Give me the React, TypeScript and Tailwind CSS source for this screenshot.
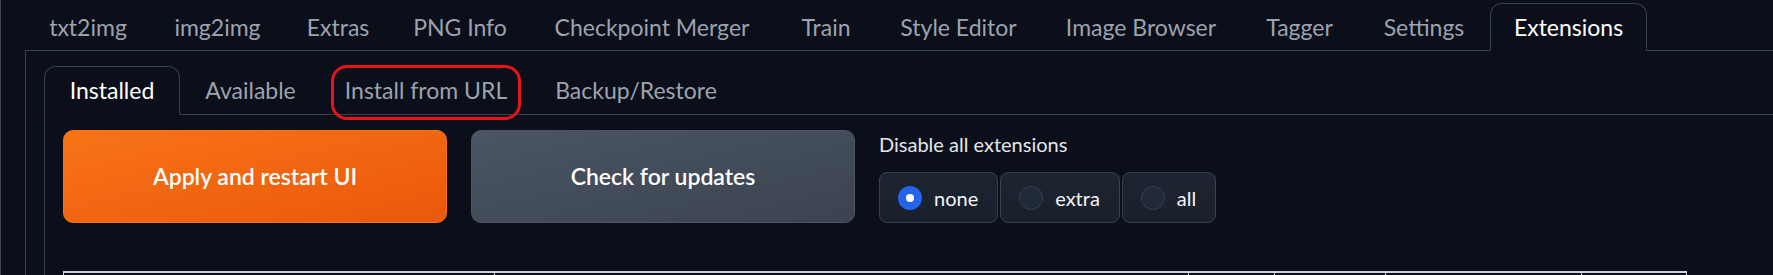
type Tab = {
  label: string
  width: string
  active?: boolean
}

const mainTabs: Tab[] = [
  { label: 'txt2img', width: 'w-[126px]' },
  { label: 'img2img', width: 'w-[133px]' },
  { label: 'Extras', width: 'w-[108px]' },
  { label: 'PNG Info', width: 'w-[136px]' },
  { label: 'Checkpoint Merger', width: 'w-[248px]' },
  { label: 'Train', width: 'w-[100px]' },
  { label: 'Style Editor', width: 'w-[165px]' },
  { label: 'Image Browser', width: 'w-[200px]' },
  { label: 'Tagger', width: 'w-[117px]' },
  { label: 'Settings', width: 'w-[132px]' },
  { label: 'Extensions', width: 'w-[157px]', active: true },
]

const extensionTabs: Tab[] = [
  { label: 'Installed', width: 'w-[136px]', active: true },
  { label: 'Available', width: 'w-[141px]' },
  { label: 'Install from URL', width: 'w-[210px]' },
  { label: 'Backup/Restore', width: 'w-[210px]' },
]

// only the top edge of the extensions table is inside the screenshot
const columnWidths = [
  'w-[431px]',
  'w-[695px]',
  'w-[86px]',
  'w-[111px]',
  'w-[196px]',
  'w-[105px]',
]

const disableOptions = ['none', 'extra', 'all']

function TabButton({ tab, height }: { tab: Tab; height: string }) {
  const base = `${tab.width} ${height} -mb-px flex shrink-0 items-center justify-center whitespace-nowrap rounded-t-[12px] border text-[23px]`
  if (tab.active) {
    return (
      <button className={`${base} border-[#374151] border-b-[#0b0f19] bg-[#0b0f19] text-white`}>
        {tab.label}
      </button>
    )
  }
  return (
    <button className={`${base} border-transparent text-[#9ca3af]`}>
      {tab.label}
    </button>
  )
}

function RadioOption({ label, checked }: { label: string; checked?: boolean }) {
  return (
    <label className="flex h-[51px] items-center gap-[12px] rounded-[8px] border border-[#374151] bg-gradient-to-b from-[#1e2532] to-[#19202c] pl-[18px] pr-[19px]">
      {checked ? (
        <span className="flex size-[24px] items-center justify-center rounded-full bg-[#2563eb]">
          <span className="size-[8px] rounded-full bg-white" />
        </span>
      ) : (
        <span className="size-[24px] rounded-full border border-[#374151] bg-[#1f2937]" />
      )}
      <span className="text-[20px] text-[#f3f4f6]">{label}</span>
    </label>
  )
}

export default function App() {
  return (
    <div className="relative h-[275px] w-[1773px] overflow-hidden border-l border-[#3f444e] bg-[#0b0f19] font-[Lato,sans-serif]">
      <div className="ml-[24px] w-[1800px] pt-[3px]">
        <nav className="flex border-b border-[#374151]">
          {mainTabs.map((tab) => (
            <TabButton key={tab.label} tab={tab} height="h-[48px]" />
          ))}
        </nav>

        <div className="border-l border-[#374151] pl-[18px] pt-[15px]">
          <nav className="flex border-b border-[#374151]">
            {extensionTabs.map((tab) => (
              <TabButton key={tab.label} tab={tab} height="h-[49px]" />
            ))}
          </nav>

          <div className="border-l border-[#374151] pl-[18px] pt-[15px]">
            <div className="flex items-start gap-[24px]">
              <button className="h-[93px] w-[384px] rounded-[10px] border border-[#f97316] bg-gradient-to-br from-[#f97316] to-[#ea580c] text-[23px] font-semibold text-white">
                Apply and restart UI
              </button>
              <button className="h-[93px] w-[384px] rounded-[10px] border border-[#4b5563] bg-gradient-to-br from-[#4b5563] to-[#3b4350] text-[23px] font-semibold text-white">
                Check for updates
              </button>
              <div className="flex flex-col">
                <span className="text-[20px] leading-[28px] text-[#e5e7eb]">
                  Disable all extensions
                </span>
                <div className="mt-[14px] flex gap-[2px]">
                  {disableOptions.map((option) => (
                    <RadioOption
                      key={option}
                      label={option}
                      checked={option === 'none'}
                    />
                  ))}
                </div>
              </div>
            </div>

            <div className="mt-[48px] flex w-[1624px] border-l border-t-2 border-[#d1d5db]">
              {columnWidths.map((width) => (
                <div
                  key={width}
                  className={`${width} h-[40px] border-r border-[#d1d5db]`}
                />
              ))}
            </div>
          </div>
        </div>
      </div>

      <div className="absolute left-[330px] top-[65px] h-[55px] w-[190px] rounded-[16px] border-[3px] border-[#e8141c]" />
    </div>
  )
}
